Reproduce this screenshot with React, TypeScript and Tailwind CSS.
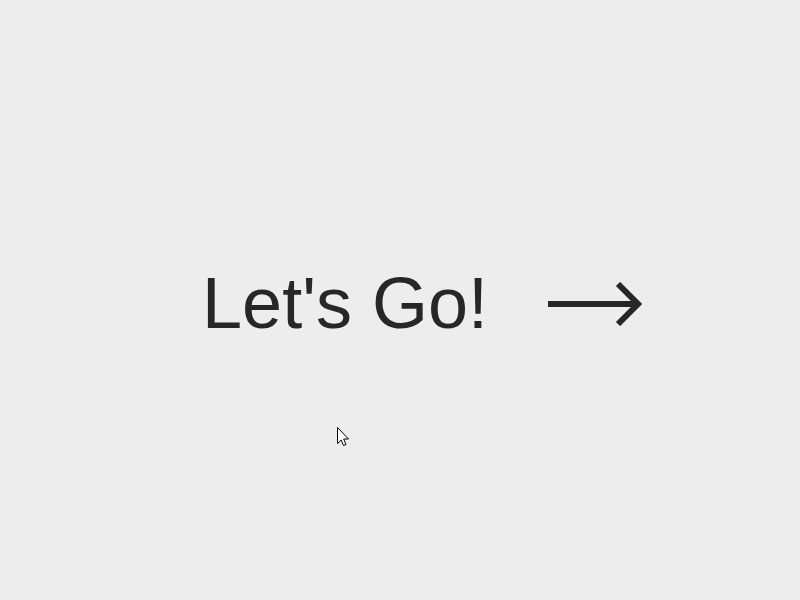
export default function App() {
  return (
    <main className="flex min-h-screen items-center justify-center bg-[#ededed] pt-2 font-['Liberation_Sans',Arial,sans-serif] text-[#272727]">
      <button type="button" className="flex items-center gap-15 pl-[46px]">
        <span className="pb-0.5 text-[72px] leading-20 whitespace-nowrap">Let's Go!</span>
        <svg className="h-11 w-24" viewBox="0 0 96 44" fill="none" stroke="currentColor" strokeWidth="6" aria-hidden="true">
          <path d="M0 22H90M70 2L90 22L70 42" />
        </svg>
      </button>
      <svg className="pointer-events-none absolute top-[427px] left-[337px] h-5 w-3" viewBox="0 0 12 20" aria-hidden="true">
        <path d="M.5 .5V16.5L4.2 13L6.5 18.5L9 17.5L6.7 12H11.5Z" fill="#fff" stroke="#000" />
      </svg>
    </main>
  );
}
